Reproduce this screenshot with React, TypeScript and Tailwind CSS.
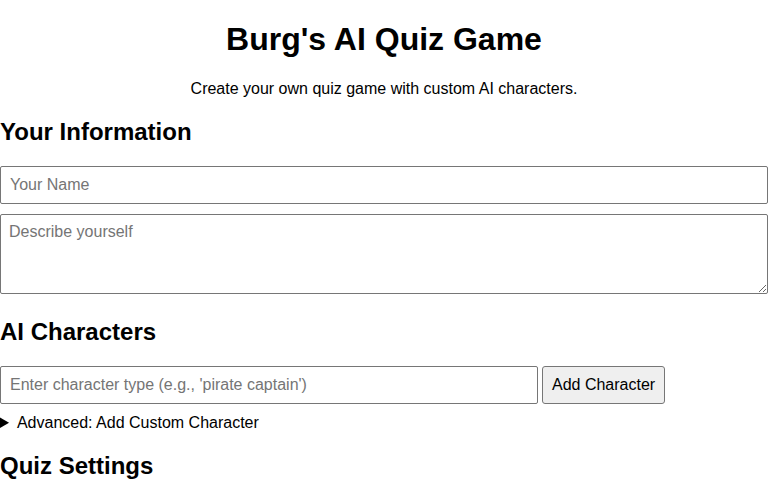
export default function App() {
  return (
    <div className="min-h-screen bg-white font-['Liberation_Sans',Arial,sans-serif] text-black">
      <h1 className="mt-[21px] mb-[22px] text-center text-[32px] leading-[37px] font-bold">
        Burg's AI Quiz Game
      </h1>
      <p className="text-center text-base leading-[18px]">
        Create your own quiz game with custom AI characters.
      </p>

      <h2 className="mt-5 mb-5 text-2xl leading-[28px] font-bold">Your Information</h2>
      <input
        type="text"
        placeholder="Your Name"
        className="block h-[38px] w-full rounded-[2px] border border-[#767676] px-[9px] text-base placeholder:text-[#757575]"
      />
      <textarea
        placeholder="Describe yourself"
        className="mt-[10px] block h-[80px] w-full rounded-[2px] border border-[#767676] px-2 py-2 text-base leading-[18px] placeholder:text-[#757575]"
      />

      <h2 className="mt-6 mb-5 text-2xl leading-[28px] font-bold">AI Characters</h2>
      <div className="flex items-center gap-1">
        <input
          type="text"
          placeholder="Enter character type (e.g., 'pirate captain')"
          className="h-[38px] w-[538px] rounded-[2px] border border-[#767676] px-[9px] text-base placeholder:text-[#757575]"
        />
        <button className="h-[38px] rounded-[3px] border border-[#767676] bg-[#efefef] px-[9px] text-base">
          Add Character
        </button>
      </div>

      <details className="mt-[10px]">
        <summary className="cursor-pointer text-base leading-[18px]">Advanced: Add Custom Character</summary>
      </details>

      <h2 className="mt-5 mb-5 text-2xl leading-[28px] font-bold">Quiz Settings</h2>
    </div>
  );
}
